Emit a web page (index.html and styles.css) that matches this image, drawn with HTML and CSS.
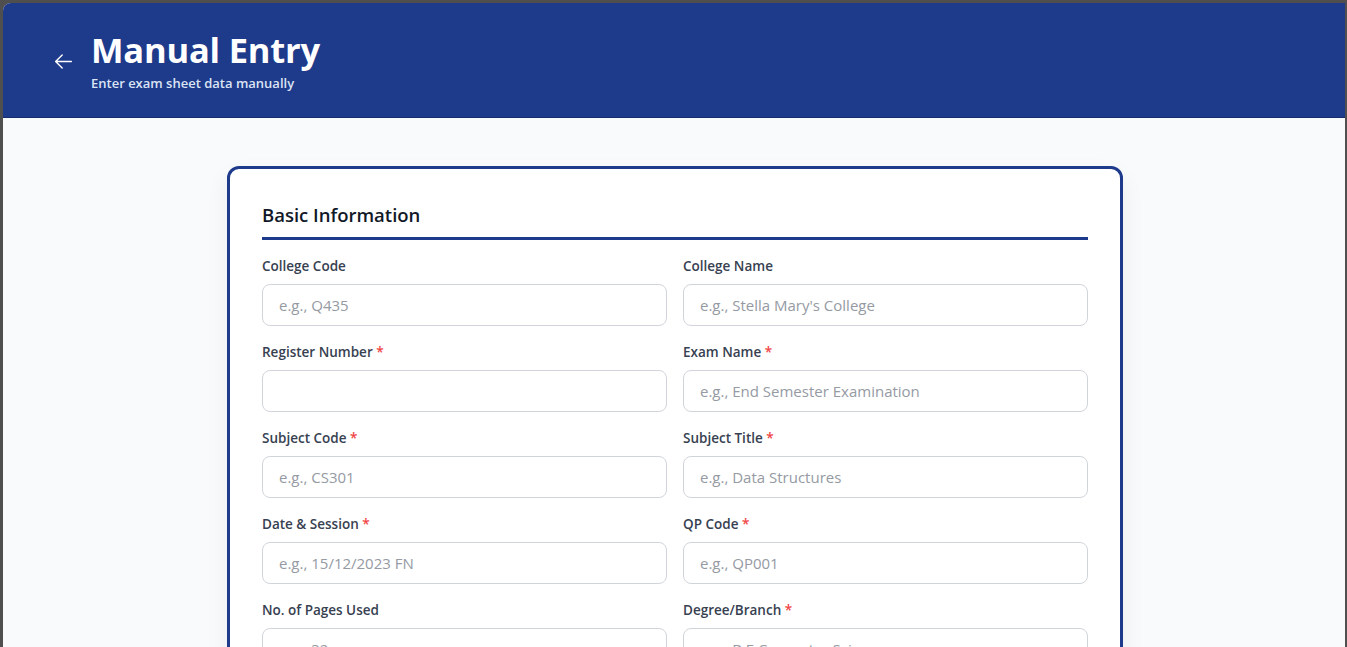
FILE: index.html
```html
<!DOCTYPE html>
<html lang="en">

<head>
    <meta charset="UTF-8">
    <meta name="viewport" content="width=device-width, initial-scale=1.0">
    <title>Manual Entry</title>
    <link rel="stylesheet" href="styles.css">
</head>

<body>
    <div class="window">
        <header class="topbar">
            <button type="button" class="back-btn" aria-label="Back">
                <svg width="21" height="21" viewBox="0 0 24 24" fill="none" stroke="currentColor" stroke-width="1.6"
                    stroke-linecap="round" stroke-linejoin="round">
                    <path d="M10.5 19.5 3 12m0 0 7.5-7.5M3 12h18" />
                </svg>
            </button>
            <div class="titles">
                <h1>Manual Entry</h1>
                <p>Enter exam sheet data manually</p>
            </div>
        </header>

        <main class="content">
            <form class="card">
                <h2 class="section-title">Basic Information</h2>

                <div class="grid">
                    <div class="field">
                        <label for="college-code">College Code</label>
                        <input type="text" id="college-code" placeholder="e.g., Q435">
                    </div>
                    <div class="field">
                        <label for="college-name">College Name</label>
                        <input type="text" id="college-name" placeholder="e.g., Stella Mary's College">
                    </div>

                    <div class="field">
                        <label for="register-no">Register Number <span class="req">*</span></label>
                        <input type="text" id="register-no">
                    </div>
                    <div class="field">
                        <label for="exam-name">Exam Name <span class="req">*</span></label>
                        <input type="text" id="exam-name" placeholder="e.g., End Semester Examination">
                    </div>

                    <div class="field">
                        <label for="subject-code">Subject Code <span class="req">*</span></label>
                        <input type="text" id="subject-code" placeholder="e.g., CS301">
                    </div>
                    <div class="field">
                        <label for="subject-title">Subject Title <span class="req">*</span></label>
                        <input type="text" id="subject-title" placeholder="e.g., Data Structures">
                    </div>

                    <div class="field">
                        <label for="date-session">Date &amp; Session <span class="req">*</span></label>
                        <input type="text" id="date-session" placeholder="e.g., 15/12/2023 FN">
                    </div>
                    <div class="field">
                        <label for="qp-code">QP Code <span class="req">*</span></label>
                        <input type="text" id="qp-code" placeholder="e.g., QP001">
                    </div>

                    <div class="field">
                        <label for="pages">No. of Pages Used</label>
                        <input type="text" id="pages" placeholder="e.g., 32">
                    </div>
                    <div class="field">
                        <label for="degree">Degree/Branch <span class="req">*</span></label>
                        <input type="text" id="degree" placeholder="e.g., B.E Computer Science">
                    </div>
                </div>
            </form>
        </main>
    </div>
</body>

</html>
```

FILE: styles.css
```css
* {
    padding: 0;
    margin: 0;
    box-sizing: border-box;
    font-family: 'Open Sans', 'Noto Sans', sans-serif;
}

html,
body {
    height: 100%;
    overflow: hidden;
}

body {
    background: #4f4f4f;
    padding: 3px 2px 0 3px;
}

/* app window inside the desktop frame */
.window {
    height: 100%;
    background: #f8fafc;
    border-top-left-radius: 8px;
    overflow: hidden;
}

.topbar {
    display: flex;
    align-items: center;
    gap: 17px;
    background: #1e3a8a;
    border-bottom: 1px solid #172c6b;
    padding: 24px 48px 24px 50px;
    height: 115px;
}

.back-btn {
    display: flex;
    background: none;
    border: none;
    color: #ffffff;
    cursor: pointer;
    margin-top: 2px;
}

.titles h1 {
    color: #ffffff;
    font-size: 34.5px;
    font-weight: 700;
    line-height: 44px;
    letter-spacing: -0.2px;
}

.titles p {
    color: #dbe4f5;
    font-size: 13px;
    font-weight: 600;
    line-height: 18px;
    margin-top: 2px;
}

.content {
    padding: 48px 24px;
}

.card {
    width: 896px;
    margin: 0 auto;
    background: #ffffff;
    border: 3px solid #1e3a8a;
    border-radius: 12px;
    padding: 32px 32px 40px;
    box-shadow: 0 10px 25px rgba(15, 23, 42, 0.06);
    position: relative;
    left: 1px;
}

.section-title {
    font-size: 18.5px;
    font-weight: 600;
    line-height: 28px;
    color: #111827;
    padding-bottom: 8px;
    border-bottom: 3px solid #1e3a8a;
    margin-bottom: 16px;
}

.grid {
    display: grid;
    grid-template-columns: 1fr 1fr;
    column-gap: 16px;
    row-gap: 16px;
}

.field label {
    display: block;
    font-size: 13.5px;
    font-weight: 600;
    line-height: 20px;
    color: #374151;
    margin-bottom: 8px;
}

.req {
    color: #ef4444;
}

.field input {
    width: 100%;
    height: 42px;
    padding: 0 16px;
    border: 1px solid #d1d5db;
    border-radius: 8px;
    font-size: 15px;
    color: #111827;
    outline: none;
    background: #ffffff;
}

.field input::placeholder {
    color: #959aa3;
}

.field input:focus {
    border-color: #1e3a8a;
}
```
